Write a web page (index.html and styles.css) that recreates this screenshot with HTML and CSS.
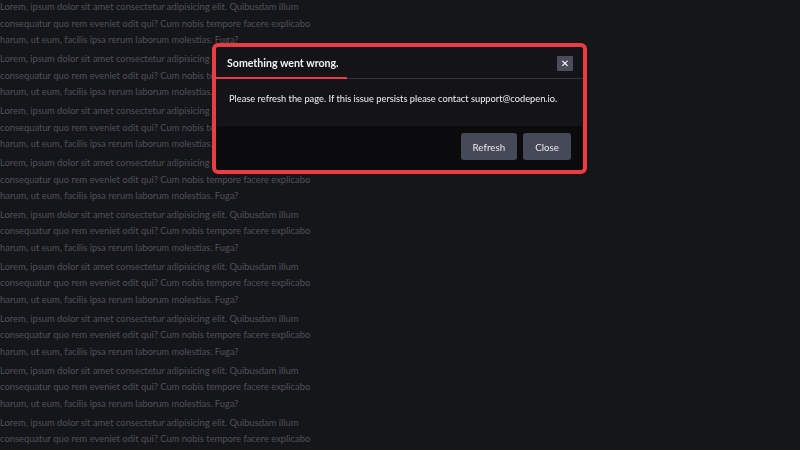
FILE: index.html
```html
<!DOCTYPE html>
<html lang="en">
<head>
<meta charset="utf-8">
<title>Error dialog</title>
<link rel="stylesheet" href="styles.css">
</head>
<body>
<main class="content">
  <p>Lorem, ipsum dolor sit amet consectetur adipisicing elit. Quibusdam illum consequatur quo rem eveniet odit qui? Cum nobis tempore facere explicabo harum, ut eum, facilis ipsa rerum laborum molestias. Fuga?</p>
  <p>Lorem, ipsum dolor sit amet consectetur adipisicing elit. Quibusdam illum consequatur quo rem eveniet odit qui? Cum nobis tempore facere explicabo harum, ut eum, facilis ipsa rerum laborum molestias. Fuga?</p>
  <p>Lorem, ipsum dolor sit amet consectetur adipisicing elit. Quibusdam illum consequatur quo rem eveniet odit qui? Cum nobis tempore facere explicabo harum, ut eum, facilis ipsa rerum laborum molestias. Fuga?</p>
  <p>Lorem, ipsum dolor sit amet consectetur adipisicing elit. Quibusdam illum consequatur quo rem eveniet odit qui? Cum nobis tempore facere explicabo harum, ut eum, facilis ipsa rerum laborum molestias. Fuga?</p>
  <p>Lorem, ipsum dolor sit amet consectetur adipisicing elit. Quibusdam illum consequatur quo rem eveniet odit qui? Cum nobis tempore facere explicabo harum, ut eum, facilis ipsa rerum laborum molestias. Fuga?</p>
  <p>Lorem, ipsum dolor sit amet consectetur adipisicing elit. Quibusdam illum consequatur quo rem eveniet odit qui? Cum nobis tempore facere explicabo harum, ut eum, facilis ipsa rerum laborum molestias. Fuga?</p>
  <p>Lorem, ipsum dolor sit amet consectetur adipisicing elit. Quibusdam illum consequatur quo rem eveniet odit qui? Cum nobis tempore facere explicabo harum, ut eum, facilis ipsa rerum laborum molestias. Fuga?</p>
  <p>Lorem, ipsum dolor sit amet consectetur adipisicing elit. Quibusdam illum consequatur quo rem eveniet odit qui? Cum nobis tempore facere explicabo harum, ut eum, facilis ipsa rerum laborum molestias. Fuga?</p>
  <p>Lorem, ipsum dolor sit amet consectetur adipisicing elit. Quibusdam illum consequatur quo rem eveniet odit qui? Cum nobis tempore facere explicabo harum, ut eum, facilis ipsa rerum laborum molestias. Fuga?</p>
</main>

<div class="dialog" role="dialog" aria-labelledby="dlg-title">
  <header class="dialog-header">
    <h2 class="dialog-title" id="dlg-title">Something went wrong.</h2>
    <button class="dialog-x" aria-label="Close">&#x2715;</button>
  </header>
  <div class="dialog-body">
    <p>Please refresh the page. If this issue persists please contact support@codepen.io.</p>
  </div>
  <footer class="dialog-footer">
    <button class="btn">Refresh</button>
    <button class="btn">Close</button>
  </footer>
</div>
</body>
</html>
```

FILE: styles.css
```css
html, body {
  margin: 0;
  padding: 0;
  background: #15161a;
  height: 100%;
  overflow: hidden;
}

body {
  font-family: Lato, "Noto Sans", sans-serif;
}

.content {
  width: 322px;
  margin-top: -1px;
  color: #505158;
  font-size: 9.4px;
  line-height: 16.6px;
}

.content p {
  margin: 0 0 2.2px;
}

.dialog {
  position: fixed;
  left: 216px;
  top: 47px;
  width: 367px;
  outline: 4px solid #ec3b43;
  border-radius: 2px;
  background: #141418;
  color: #f2f2f2;
  overflow: hidden;
}

.dialog-header {
  display: flex;
  align-items: center;
  justify-content: space-between;
  height: 32px;
  padding-right: 10px;
  border-bottom: 1px solid #34343b;
  box-sizing: border-box;
}

.dialog-title {
  margin: 0 0 -1px;
  align-self: stretch;
  display: flex;
  align-items: center;
  width: 131px;
  box-sizing: border-box;
  padding: 2px 0 0 11px;
  font-size: 10.6px;
  font-weight: 700;
  border-bottom: 2px solid #ec3b43;
}

.dialog-x {
  width: 16px;
  height: 15px;
  padding: 0;
  border: 0;
  border-radius: 1px;
  background: #4b4d5c;
  color: #ffffff;
  font-size: 10px;
  font-weight: 700;
  line-height: 15px;
  font-family: "DejaVu Sans", sans-serif;
  margin-top: 2px;
}

.dialog-body {
  padding: 12px 13px 0;
  height: 47px;
  box-sizing: border-box;
  font-size: 9.3px;
}

.dialog-body p {
  margin: 0;
  line-height: 16px;
}

.dialog-footer {
  display: flex;
  justify-content: flex-end;
  gap: 6px;
  padding: 7px 12px 10px;
  background: #0b0b0e;
}

.btn {
  height: 27px;
  padding: 0 12px;
  border: 0;
  border-radius: 3px;
  background: #464958;
  color: #e8e8ea;
  font-family: Lato, "Noto Sans", sans-serif;
  font-size: 9.8px;
}
```
